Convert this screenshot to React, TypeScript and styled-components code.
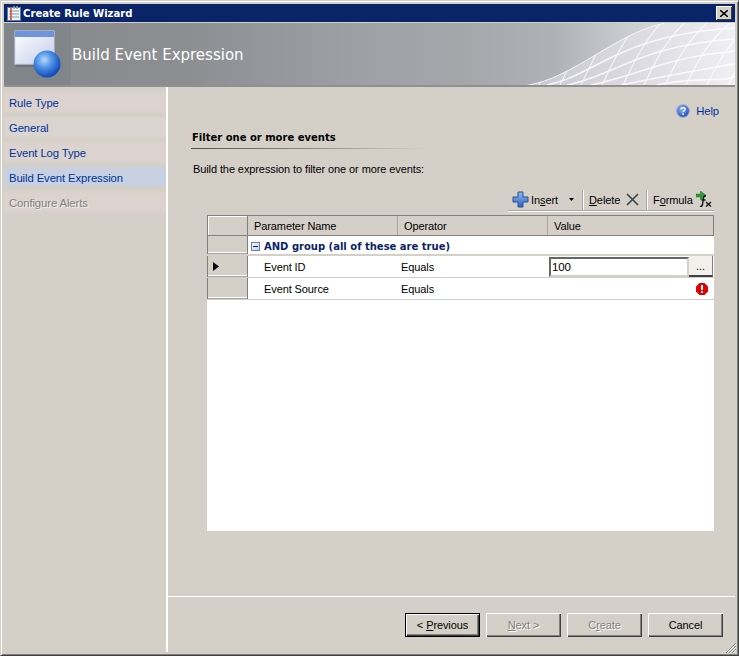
import React from "react";
import styled, { createGlobalStyle } from "styled-components";

const GlobalStyle = createGlobalStyle`
  html, body { margin: 0; padding: 0; background: #d4d0c8; }
  body { font-family: "Liberation Sans", Arial, sans-serif; font-size: 11px; color: #000; letter-spacing: -0.1px; }
  u { text-decoration: underline; }
`;

const Frame = styled.div`
  position: relative;
  box-sizing: border-box;
  width: 739px;
  height: 656px;
  padding: 4px;
  background: #d4d0c8;
  border: 1px solid;
  border-color: #d4d0c8 #404040 #404040 #d4d0c8;
  box-shadow: inset 1px 1px 0 #fff, inset -1px -1px 0 #808080;
  display: flex;
  flex-direction: column;
`;

const TitleBar = styled.div`
  height: 18px;
  margin: -1px -1px 0 -1px;
  background: #0a246a;
  color: #fff;
  display: flex;
  align-items: center;
  gap: 2px;
  padding: 0 3px;
  font-family: "DejaVu Sans", sans-serif;
  font-weight: 700;
  font-size: 10.1px;
  letter-spacing: 0;
  flex: none;
`;

const TitleText = styled.span`
  flex: 1;
`;

const CloseButton = styled.div`
  width: 16px;
  height: 14px;
  background: #d4d0c8;
  box-shadow: inset 1px 1px 0 #fff, inset -1px -1px 0 #404040;
  display: flex;
  align-items: center;
  justify-content: center;
`;

const Banner = styled.div`
  position: relative;
  height: 64px;
  margin: 1px -1px 0 -1px;
  flex: none;
  box-sizing: border-box;
  border-bottom: 2px solid #909094;
  background: linear-gradient(90deg, #87898c 0%, #8c8e92 25%, #9fa1a7 50%, #a5a6aa 62%, #b0b1b6 75%, #d2d3d8 88%, #e6e6ea 100%);
  display: flex;
  align-items: center;
  overflow: hidden;
`;

const BannerIconBox = styled.div`
  width: 67px;
  height: 100%;
  background: #7f8588;
  flex: none;
  display: flex;
  align-items: center;
  justify-content: center;
`;

const BannerTitle = styled.div`
  font-family: "DejaVu Sans", sans-serif;
  font-size: 15px;
  letter-spacing: 0;
  color: #fff;
  margin-left: 1px;
  margin-top: 1px;
`;

const Mesh = styled.svg`
  position: absolute;
  right: 0;
  top: 0;
`;

const Body = styled.div`
  flex: 1;
  display: flex;
  min-height: 0;
  margin: 0 -1px -1px -1px;
`;

const Sidebar = styled.nav`
  width: 164px;
  flex: none;
  box-sizing: border-box;
  padding-top: 3px;
  background: #d4d0c8;
  border-right: 2px solid #fff;
  display: flex;
  flex-direction: column;
`;

const NavItem = styled.div<{ $active?: boolean; $disabled?: boolean; $tint?: boolean }>`
  height: 25px;
  box-sizing: border-box;
  padding: 0 0 0 5px;
  display: flex;
  align-items: center;
  font-size: 11.3px;
  color: ${(p) => (p.$disabled ? "#808080" : "#003399")};
  text-shadow: ${(p) => (p.$disabled ? "1px 1px 0 #efefef" : "none")};
  background: ${(p) =>
    p.$active
      ? "linear-gradient(180deg, transparent 2px, #c7d1e1 2px, #c7d1e1 21px, transparent 21px)"
      : p.$tint
      ? "linear-gradient(180deg, #d4d0c8 0, #dcd3ce 4px, #dcd3ce 20px, #d4d0c8 24px)"
      : "linear-gradient(180deg, #d4d0c8 0, #dad5d0 4px, #dad5d0 20px, #d4d0c8 24px)"};
`;

const Main = styled.main`
  flex: 1;
  min-width: 0;
  display: flex;
  flex-direction: column;
`;

const HelpRow = styled.div`
  display: flex;
  justify-content: flex-end;
  align-items: center;
  gap: 6px;
  height: 16px;
  margin-top: 16px;
  padding-right: 16px;
  font-size: 11.3px;
  color: #003399;
`;

const Section = styled.section`
  padding: 0 21px 0 23px;
  margin-top: 12px;
`;

const SectionTitle = styled.h3`
  margin: 0;
  width: 234px;
  height: 18px;
  box-sizing: border-box;
  padding-left: 1px;
  font-family: "DejaVu Sans", sans-serif;
  font-size: 10px;
  font-weight: 700;
  letter-spacing: 0;
  line-height: 13px;
  border-bottom: 1px solid;
  border-image: linear-gradient(90deg, #55524e, #8a8883 50%, #d4d0c8) 1;
`;

const Description = styled.p`
  margin: 13px 0 0 2px;
  line-height: 14px;
`;

const ToolbarRow = styled.div`
  display: flex;
  justify-content: flex-end;
  margin-top: 13px;
`;

const Toolbar = styled.div`
  display: flex;
  align-items: center;
  height: 22px;
  width: 206px;
  box-sizing: border-box;
  border-bottom: 1px solid #a9a69f;
  box-shadow: 0 1px 0 #fff;
`;

const ToolButton = styled.div<{ $w: number; $pl: number; $gap: number }>`
  display: flex;
  align-items: center;
  flex: none;
  gap: ${(p) => p.$gap}px;
  width: ${(p) => p.$w}px;
  height: 20px;
  padding-left: ${(p) => p.$pl}px;
  box-sizing: border-box;
`;

const CaretWrap = styled.span`
  display: flex;
  margin-left: 9px;
`;

const ToolSep = styled.div`
  width: 1px;
  height: 20px;
  flex: none;
  background: #a9a69f;
  box-shadow: 1px 0 0 #fff;
  margin-right: 1px;
`;

const Grid = styled.div`
  margin: 4px 0 0 39px;
  width: 507px;
  height: 316px;
  background: #fff;
  display: flex;
  flex-direction: column;
`;

const Row = styled.div<{ $h: number }>`
  display: flex;
  flex: none;
  height: ${(p) => p.$h}px;
  box-sizing: border-box;
  border-bottom: 1px solid #cfcfcf;
`;

const GroupRow = styled(Row)`
  border-bottom: 2px solid #d4d0c8;
`;

const RowHead = styled.div`
  width: 41px;
  flex: none;
  box-sizing: border-box;
  background: #d4d0c8;
  border-right: 1px solid #808080;
  border-left: 1px solid #808080;
  box-shadow: inset 0 -1px 0 #a9a69f, inset 0 -2px 0 #fff;
  display: flex;
  align-items: center;
  padding-left: 5px;
`;

const HeaderRow = styled.div`
  display: flex;
  height: 21px;
  flex: none;
  box-sizing: border-box;
  background: #d4d0c8;
  border: 1px solid #808080;
`;

const HeaderCorner = styled.div`
  width: 39px;
  border-right: 1px solid #808080;
  box-shadow: inset 1px 1px 0 #fff;
`;

const HeaderCell = styled.div<{ $w?: number }>`
  width: ${(p) => (p.$w ? `${p.$w}px` : "auto")};
  flex: ${(p) => (p.$w ? "none" : 1)};
  box-sizing: border-box;
  padding-left: 6px;
  display: flex;
  align-items: center;
  border-right: ${(p) => (p.$w ? "1px solid #a9a69f" : "none")};
`;

const Cell = styled.div<{ $w?: number }>`
  width: ${(p) => (p.$w ? `${p.$w}px` : "auto")};
  flex: ${(p) => (p.$w ? "none" : 1)};
  box-sizing: border-box;
  display: flex;
  align-items: center;
  min-width: 0;
`;

const NameCell = styled(Cell)`
  padding-left: 16px;
`;

const OperatorCell = styled(Cell)`
  padding-left: 3px;
`;

const GroupCell = styled.div`
  flex: 1;
  display: flex;
  align-items: center;
  gap: 4px;
  padding: 2px 0 0 3px;
  color: #0a246a;
  font-family: "DejaVu Sans", sans-serif;
  font-weight: 700;
  font-size: 10px;
  letter-spacing: 0;
`;

const ExpandBox = styled.div`
  width: 9px;
  height: 9px;
  box-sizing: border-box;
  border: 1px solid #6a7fa8;
  background: linear-gradient(135deg, #f4f6fb, #c5cfe6);
  display: flex;
  align-items: center;
  justify-content: center;
  &::after {
    content: "";
    width: 5px;
    height: 1px;
    background: #0a246a;
  }
`;

const ValueInput = styled.div`
  width: 140px;
  height: 20px;
  margin-left: 1px;
  flex: none;
  box-sizing: border-box;
  padding: 1px 0 0 1px;
  display: flex;
  align-items: center;
  background: #fff;
  border: 2px solid;
  border-color: #666 #d4d0c8 #d4d0c8 #666;
  font-size: 11.5px;
`;

const EllipsisButton = styled.div`
  width: 24px;
  height: 21px;
  flex: none;
  box-sizing: border-box;
  background: #f1f0ec;
  border-bottom: 2px solid #404040;
  border-right: 1px solid #808080;
  text-align: center;
  line-height: 21px;
`;

const ValueCell = styled(Cell)`
  padding-right: 1px;
`;

const ErrorWrap = styled.div`
  margin-left: auto;
  margin-right: 5px;
  display: flex;
`;

const Footer = styled.footer`
  margin-top: auto;
  height: 56px;
  flex: none;
  box-sizing: border-box;
  border-top: 1px solid #fff;
  display: flex;
  justify-content: flex-end;
  gap: 6px;
  padding: 16px 12px 0 0;
`;

const DialogButton = styled.div<{ $default?: boolean; $disabled?: boolean }>`
  width: 75px;
  height: 24px;
  box-sizing: border-box;
  display: flex;
  align-items: center;
  justify-content: center;
  background: #d4d0c8;
  color: ${(p) => (p.$disabled ? "#808080" : "#000")};
  text-shadow: ${(p) => (p.$disabled ? "1px 1px 0 #fff" : "none")};
  border: ${(p) => (p.$default ? "1px solid #000" : "none")};
  box-shadow: inset 1px 1px 0 #fff, inset -1px -1px 0 #404040, inset -2px -2px 0 #808080;
`;

const Grip = styled.svg`
  position: absolute;
  right: 1px;
  bottom: 1px;
`;

const AppIcon = () => (
  <svg width="14" height="15" viewBox="0 0 14 15">
    <rect x="0.5" y="1.5" width="13" height="13" fill="#f4f4ec" stroke="#5a7bb0" />
    <path d="M2 5h10M2 8h10M2 11h10" stroke="#7d9cc9" />
    <path d="M4 2v12" stroke="#d8452a" strokeWidth="1.5" />
    <path d="M7 0v3M10 0v3" stroke="#9a9a9a" strokeWidth="1.5" />
  </svg>
);

const WizardIcon = () => (
  <svg width="50" height="50" viewBox="0 0 50 50">
    <defs>
      <radialGradient id="ball" cx="40%" cy="35%" r="65%">
        <stop offset="0" stopColor="#b8d8fa" />
        <stop offset="0.45" stopColor="#4f93e6" />
        <stop offset="1" stopColor="#1048b8" />
      </radialGradient>
      <linearGradient id="win" x1="0" y1="0" x2="1" y2="1">
        <stop offset="0" stopColor="#fff" />
        <stop offset="1" stopColor="#c4ccec" />
      </linearGradient>
    </defs>
    <rect x="2" y="2" width="39" height="33" fill="url(#win)" stroke="#cfd6ee" />
    <rect x="2" y="2" width="39" height="6" fill="#6f93dc" />
    <rect x="3" y="36" width="37" height="2" fill="#6a6e78" />
    <circle cx="34" cy="35" r="13.5" fill="url(#ball)" />
  </svg>
);

const sheetPath = "M2 62 C50 54 90 10 139 0 L210 0 L210 62 Z";

const BannerMesh = () => {
  const rows = [
    [22, 5],
    [42, 16],
    [66, 28],
    [96, 41],
    [132, 53],
  ].map(([x0, ye]) => `M${x0} 62 C${x0 + 50} 52 ${x0 + 70} ${ye + 7} 210 ${ye}`);
  const ribs = [0, 1, 2, 3, 4, 5, 6, 7, 8, 9].map((i) => {
    const x = 14 + i * 21;
    return `M${x} 62 C${x + 8} 46 ${x + 18} 22 ${x + 30 + i * 2} 0`;
  });
  return (
    <Mesh width="210" height="62" viewBox="0 0 210 62">
      <defs>
        <clipPath id="sheet">
          <path d={sheetPath} />
        </clipPath>
        <linearGradient id="sheetFill" x1="0" y1="0" x2="1" y2="0">
          <stop offset="0" stopColor="#c8c9ce" />
          <stop offset="0.55" stopColor="#dcdce2" />
          <stop offset="1" stopColor="#f0eff3" />
        </linearGradient>
      </defs>
      <path d={sheetPath} fill="url(#sheetFill)" />
      <g clipPath="url(#sheet)" fill="none" stroke="#fff" opacity="0.8">
        {rows.map((d) => (
          <path key={d} d={d} strokeWidth="1.6" />
        ))}
        {ribs.map((d) => (
          <path key={d} d={d} strokeWidth="1.1" />
        ))}
        <path d="M2 62 C50 54 90 10 139 0" strokeWidth="1.5" />
      </g>
    </Mesh>
  );
};

const HelpIcon = () => (
  <svg width="14" height="14" viewBox="0 0 14 14">
    <defs>
      <radialGradient id="helpBall" cx="40%" cy="35%" r="70%">
        <stop offset="0" stopColor="#8fb6f5" />
        <stop offset="1" stopColor="#1b45b5" />
      </radialGradient>
    </defs>
    <circle cx="7" cy="7" r="6.3" fill="url(#helpBall)" stroke="#93a9d8" />
    <path d="M5 5.3c0-2.2 4.2-2.2 4.2 0 0 1.5-2.1 1.4-2.1 3" fill="none" stroke="#fff" strokeWidth="1.4" />
    <rect x="6.3" y="9.3" width="1.6" height="1.6" fill="#fff" />
  </svg>
);

const PlusIcon = () => (
  <svg width="17" height="17" viewBox="0 0 17 17">
    <defs>
      <linearGradient id="plus" x1="0" y1="0" x2="0" y2="1">
        <stop offset="0" stopColor="#8fb8f0" />
        <stop offset="1" stopColor="#2f64c0" />
      </linearGradient>
    </defs>
    <path d="M6 1h5v5h5v5h-5v5H6v-5H1V6h5z" fill="url(#plus)" stroke="#2a4f95" />
  </svg>
);

const DeleteIcon = () => (
  <svg width="13" height="13" viewBox="0 0 13 13">
    <path d="M1 1l11 11M12 1L1 12" stroke="#3c4650" strokeWidth="1.7" />
  </svg>
);

const FormulaIcon = () => (
  <svg width="16" height="17" viewBox="0 0 16 17">
    <path d="M0 3h4.500V0l5.500 4.500L4.500 9V6H0z" fill="#2f9e35" stroke="#1c6a22" strokeWidth="0.5" />
    <path d="M10 5c-1.500-.6-2.200.3-2.500 2l-1 6.500c-.3 1.600-1.200 2.200-2.500 1.600M5.500 9h4" fill="none" stroke="#111" strokeWidth="1.400" />
    <path d="M10 11l5 4.500M15 11l-5 4.500" stroke="#111" strokeWidth="1.300" />
  </svg>
);

const Caret = () => (
  <svg width="5" height="3" viewBox="0 0 5 3">
    <path d="M0 0h5L2.500 3z" fill="#000" />
  </svg>
);

const RowPointer = () => (
  <svg width="6" height="9" viewBox="0 0 6 9">
    <path d="M0 0l6 4.500L0 9z" fill="#000" />
  </svg>
);

const ErrorIcon = () => (
  <svg width="12" height="12" viewBox="0 0 12 12">
    <path d="M3.500 0h5L12 3.500v5L8.500 12h-5L0 8.500v-5z" fill="#e00000" />
    <rect x="5" y="2" width="2" height="5" fill="#fff" />
    <rect x="5" y="8" width="2" height="2" fill="#fff" />
  </svg>
);

const navItems = ["Rule Type", "General", "Event Log Type", "Build Event Expression", "Configure Alerts"];

const App: React.FC = () => {
  return (
    <>
      <GlobalStyle />
      <Frame>
        <TitleBar>
          <AppIcon />
          <TitleText>Create Rule Wizard</TitleText>
          <CloseButton>
            <svg width="8" height="7" viewBox="0 0 8 7">
              <path d="M0 0l8 7M8 0L0 7" stroke="#000" strokeWidth="1.500" />
            </svg>
          </CloseButton>
        </TitleBar>
        <Banner>
          <BannerIconBox>
            <WizardIcon />
          </BannerIconBox>
          <BannerTitle>Build Event Expression</BannerTitle>
          <BannerMesh />
        </Banner>
        <Body>
          <Sidebar>
            {navItems.map((item, i) => (
              <NavItem key={item} $active={i === 3} $disabled={i === 4} $tint={i % 2 === 0}>
                {item}
              </NavItem>
            ))}
          </Sidebar>
          <Main>
            <HelpRow>
              <HelpIcon />
              <span>Help</span>
            </HelpRow>
            <Section>
              <SectionTitle>Filter one or more events</SectionTitle>
              <Description>Build the expression to filter one or more events:</Description>
              <ToolbarRow>
                <Toolbar>
                  <ToolButton $w={74} $pl={4} $gap={2}>
                    <PlusIcon />
                    <span>
                      In<u>s</u>ert
                    </span>
                    <CaretWrap>
                      <Caret />
                    </CaretWrap>
                  </ToolButton>
                  <ToolSep />
                  <ToolButton $w={62} $pl={5} $gap={6}>
                    <span>
                      <u>D</u>elete
                    </span>
                    <DeleteIcon />
                  </ToolButton>
                  <ToolSep />
                  <ToolButton $w={66} $pl={5} $gap={3}>
                    <span>
                      F<u>o</u>rmula
                    </span>
                    <FormulaIcon />
                  </ToolButton>
                </Toolbar>
              </ToolbarRow>
            </Section>
            <Grid>
              <HeaderRow>
                <HeaderCorner />
                <HeaderCell $w={150}>Parameter Name</HeaderCell>
                <HeaderCell $w={150}>Operator</HeaderCell>
                <HeaderCell>Value</HeaderCell>
              </HeaderRow>
              <GroupRow $h={20}>
                <RowHead />
                <GroupCell>
                  <ExpandBox />
                  AND group (all of these are true)
                </GroupCell>
              </GroupRow>
              <Row $h={22}>
                <RowHead>
                  <RowPointer />
                </RowHead>
                <NameCell $w={150}>Event ID</NameCell>
                <OperatorCell $w={150}>Equals</OperatorCell>
                <ValueCell>
                  <ValueInput>100</ValueInput>
                  <EllipsisButton>...</EllipsisButton>
                </ValueCell>
              </Row>
              <Row $h={22}>
                <RowHead />
                <NameCell $w={150}>Event Source</NameCell>
                <OperatorCell $w={150}>Equals</OperatorCell>
                <ValueCell>
                  <ErrorWrap>
                    <ErrorIcon />
                  </ErrorWrap>
                </ValueCell>
              </Row>
            </Grid>
            <Footer>
              <DialogButton $default>
                <span>
                  &lt; <u>P</u>revious
                </span>
              </DialogButton>
              <DialogButton $disabled>
                <span>
                  <u>N</u>ext &gt;
                </span>
              </DialogButton>
              <DialogButton $disabled>
                <span>
                  C<u>r</u>eate
                </span>
              </DialogButton>
              <DialogButton>Cancel</DialogButton>
            </Footer>
          </Main>
        </Body>
        <Grip width="12" height="12" viewBox="0 0 12 12">
          <path d="M11 1L1 11M11 4L4 11M11 7L7 11" stroke="#808080" strokeWidth="1" />
          <path d="M11 2L2 11M11 5L5 11M11 8L8 11" stroke="#fff" strokeWidth="1" />
        </Grip>
      </Frame>
    </>
  );
};

export default App;
